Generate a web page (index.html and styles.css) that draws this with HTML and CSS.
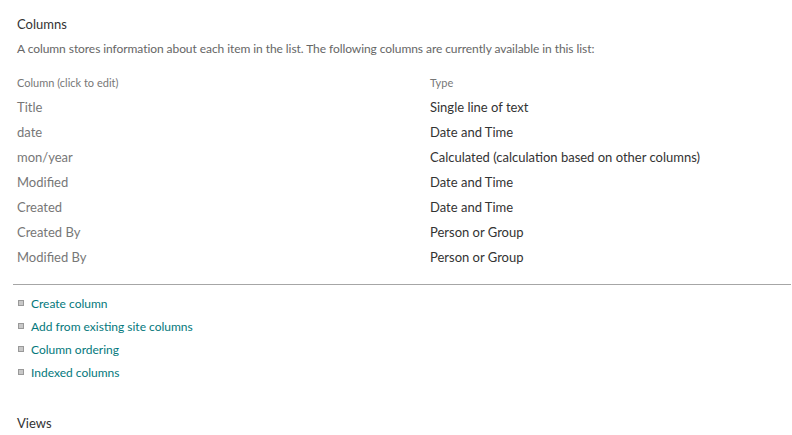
FILE: index.html
```html
<!DOCTYPE html>
<html lang="en">
<head>
    <meta charset="UTF-8">
    <title>List Settings</title>
    <link rel="stylesheet" href="styles.css">
</head>
<body>
    <div class="page">
        <h3 class="section-title">Columns</h3>
        <p class="desc">A column stores information about each item in the list. The following columns are currently available in this list:</p>
        <table class="columns">
            <tr class="head">
                <th>Column (click to edit)</th>
                <th>Type</th>
            </tr>
            <tr><td>Title</td><td>Single line of text</td></tr>
            <tr><td>date</td><td>Date and Time</td></tr>
            <tr><td>mon/year</td><td>Calculated (calculation based on other columns)</td></tr>
            <tr><td>Modified</td><td>Date and Time</td></tr>
            <tr><td>Created</td><td>Date and Time</td></tr>
            <tr><td>Created By</td><td>Person or Group</td></tr>
            <tr><td>Modified By</td><td>Person or Group</td></tr>
        </table>
        <div class="divider"></div>
        <ul class="links">
            <li><a href="#">Create column</a></li>
            <li><a href="#">Add from existing site columns</a></li>
            <li><a href="#">Column ordering</a></li>
            <li><a href="#">Indexed columns</a></li>
        </ul>
        <h3 class="section-title views">Views</h3>
    </div>
</body>
</html>
```

FILE: styles.css
```css
body {
    margin: 0;
    font-family: "Segoe UI", Lato, "Open Sans", sans-serif;
    background: #fff;
    color: #333;
}
.page {
    padding: 15px 0 0 13px;
}
.section-title {
    margin: 0 0 0 4px;
    font-size: 13px;
    font-weight: normal;
    line-height: 18px;
    color: #333;
}
.desc {
    margin: 8px 0 0 4px;
    font-size: 12px;
    line-height: 16px;
    letter-spacing: -0.07px;
    color: #666;
}
.columns {
    margin: 13px 0 0 4px;
    border-collapse: collapse;
}
.columns th {
    font-size: 11px;
    font-weight: normal;
    color: #777;
    text-align: left;
    padding: 0;
    height: 24px;
}
.columns td {
    font-size: 13px;
    padding: 0;
    height: 25px;
    color: #333;
}
.columns td:first-child,
.columns th:first-child {
    width: 413px;
}
.columns td:first-child {
    color: #777;
}
.divider {
    margin-top: 15px;
    border-top: 1px solid #a6a6a6;
    margin-right: 1px;
}
.links {
    list-style: none;
    margin: 7px 0 0 0;
    padding: 0;
}
.links li {
    display: flex;
    align-items: center;
    height: 23px;
    font-size: 12px;
}
.links li::before {
    content: "";
    width: 4px;
    height: 4px;
    margin: 0 7px 2px 5px;
    border: 1px solid #999;
    background: #c8c8c8;
}
.links a {
    color: #03787c;
    text-decoration: none;
}
.section-title.views {
    margin-top: 30px;
}
```
